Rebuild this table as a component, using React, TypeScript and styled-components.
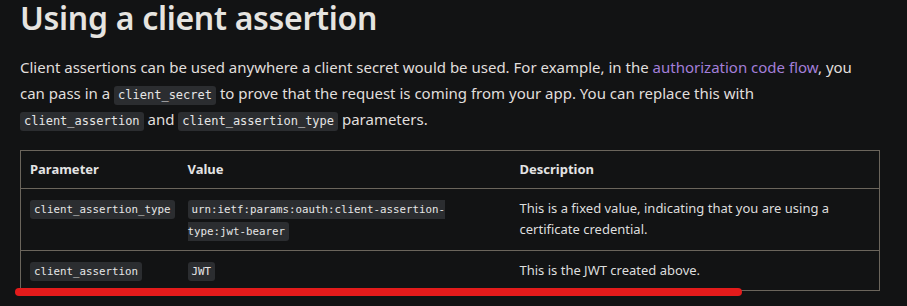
import React from "react";
import styled, { createGlobalStyle } from "styled-components";

const GlobalStyle = createGlobalStyle`
  html, body {
    margin: 0;
    padding: 0;
    background: #121314;
  }
  body {
    font-family: "Noto Sans", "Open Sans", sans-serif;
    color: #e2e2e2;
  }
`;

interface Row {
  param: string;
  value: string;
  description: string;
}

const rows: Row[] = [
  {
    param: "client_assertion_type",
    value: "urn:ietf:params:oauth:client-assertion-type:jwt-bearer",
    description:
      "This is a fixed value, indicating that you are using a certificate credential."
  },
  {
    param: "client_assertion",
    value: "JWT",
    description: "This is the JWT created above."
  }
];

export default function App() {
  return (
    <Page>
      <GlobalStyle />
      <Title>Using a client assertion</Title>
      <Paragraph>
        Client assertions can be used anywhere a client secret would be used.
        For example, in the <Link>authorization code flow</Link>, you can pass
        in a <Code>client_secret</Code> to prove that the request is coming
        from your app. You can replace this with{" "}
        <Code>client_assertion</Code> and <Code>client_assertion_type</Code>{" "}
        parameters.
      </Paragraph>
      <TableWrap>
        <Table>
          <colgroup>
            <col style={{ width: 158 }} />
            <col style={{ width: 332 }} />
            <col />
          </colgroup>
          <thead>
            <tr>
              <Th>Parameter</Th>
              <Th>Value</Th>
              <Th>Description</Th>
            </tr>
          </thead>
          <tbody>
            {rows.map((r) => (
              <tr key={r.param}>
                <Td>
                  <CellCode>{r.param}</CellCode>
                </Td>
                <Td>
                  <CellCode>{r.value}</CellCode>
                </Td>
                <Td>{r.description}</Td>
              </tr>
            ))}
          </tbody>
        </Table>
        <Underline />
      </TableWrap>
    </Page>
  );
}

const Page = styled.main`
  width: 907px;
  height: 306px;
  overflow: hidden;
  padding: 2px 28px 0 20px;
  box-sizing: border-box;
`;

const Title = styled.h1`
  margin: 0;
  font-size: 32px;
  font-weight: 600;
  line-height: 32px;
  letter-spacing: -0.3px;
  color: #e6e4e0;
`;

const Paragraph = styled.p`
  margin: 20px 0 0;
  font-size: 15px;
  line-height: 26px;
  color: #e0dfdd;
`;

const Link = styled.a`
  color: #a37fd9;
  text-decoration: none;
`;

const Code = styled.code`
  display: inline-block;
  font-family: "DejaVu Sans Mono", "Liberation Mono", monospace;
  font-size: 12px;
  line-height: 19px;
  padding: 0 4px;
  border-radius: 3px;
  background: #2b2d30;
  color: #e6e6e6;
`;

const TableWrap = styled.div`
  position: relative;
  margin-top: 18px;
`;

const Table = styled.table`
  width: 860px;
  table-layout: fixed;
  border-collapse: collapse;
  border: 1px solid #6b655c;
`;

const Th = styled.th`
  padding: 8px 9px 9px;
  font-size: 13px;
  font-weight: 700;
  line-height: 20px;
  text-align: left;
  color: #e4e4e4;
  border-bottom: 1px solid #6b655c;
`;

const Td = styled.td`
  padding: 9px 9px 8px;
  vertical-align: top;
  font-size: 13px;
  line-height: 21px;
  color: #dedede;
  border-bottom: 1px solid #6b655c;
`;

const CellCode = styled.code`
  font-family: "DejaVu Sans Mono", "Liberation Mono", monospace;
  font-size: 10.8px;
  padding: 3px 4px;
  border-radius: 3px;
  background: #2b2d30;
  color: #e6e6e6;
  line-height: 21px;
`;

const Underline = styled.div`
  position: absolute;
  left: -5px;
  top: 138px;
  width: 727px;
  height: 8px;
  border-radius: 4px;
  background: #e31b1b;
`;
